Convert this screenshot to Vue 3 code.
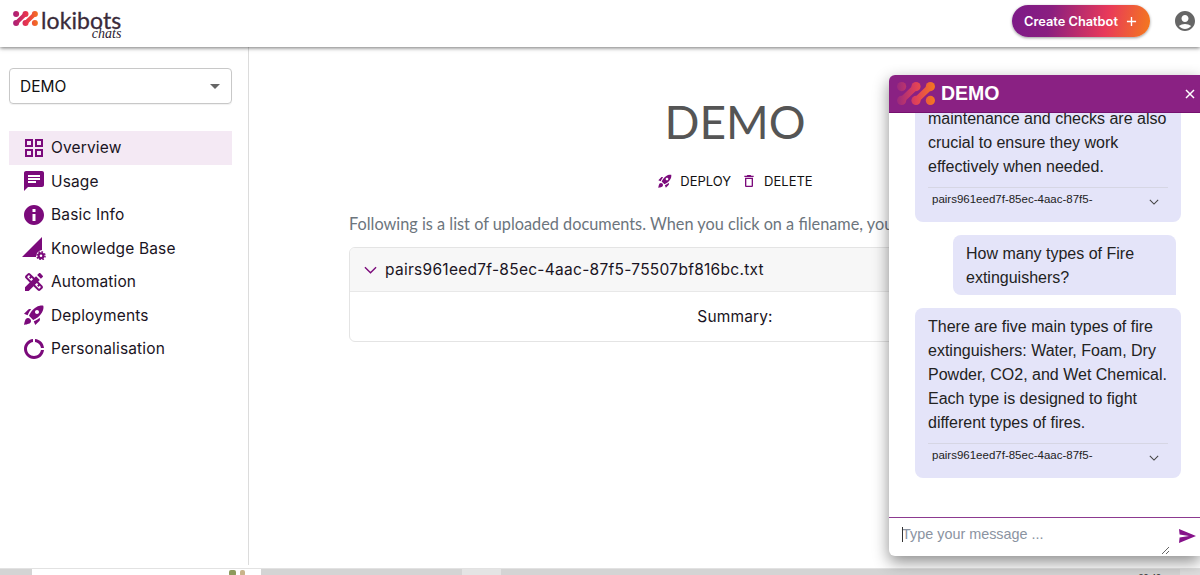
<script setup>
const nav = [
  { label: 'Overview', vb: '0 0 24 24', d: 'M3 3v8h8V3H3zm6 6H5V5h4v4zm-6 4v8h8v-8H3zm6 6H5v-4h4v4zm4-16v8h8V3h-8zm6 6h-4V5h4v4zm-6 4v8h8v-8h-8zm6 6h-4v-4h4v4z', active: true },
  { label: 'Usage', vb: '0 0 24 24', d: 'M20 2H4c-1.1 0-1.99.9-1.99 2L2 22l4-4h14c1.1 0 2-.9 2-2V4c0-1.1-.9-2-2-2zM6 9h12v2H6V9zm8 5H6v-2h8v2zm4-6H6V6h12v2z' },
  { label: 'Basic Info', vb: '0 0 24 24', d: 'M12 2C6.48 2 2 6.48 2 12s4.48 10 10 10 10-4.48 10-10S17.52 2 12 2zm1.5 16h-3v-7h3v7zm0-9h-3V6h3v3z' },
  { label: 'Knowledge Base', kb: true },
  { label: 'Automation', vb: '0 0 24 24', d: 'M16.24 11.51l1.57-1.57-3.75-3.75-1.57 1.57-4.14-4.13c-.78-.78-2.05-.78-2.83 0l-1.9 1.9c-.78.78-.78 2.05 0 2.83l4.13 4.13L3 17.25V21h3.75l4.76-4.76 4.13 4.13c.95.95 2.23.6 2.83 0l1.9-1.9c.78-.78.78-2.05 0-2.83l-4.13-4.13zm-7.06-.44L5.04 6.94l1.89-1.9L8.2 6.31 7.02 7.5l1.41 1.41 1.19-1.19 1.45 1.45-1.89 1.9zm7.88 7.89l-4.13-4.14 1.9-1.9 1.45 1.45-1.19 1.19 1.41 1.41 1.19-1.19 1.27 1.27-1.9 1.91zM20.71 7.04a1 1 0 0 0 0-1.41l-2.34-2.34c-.47-.47-1.12-.29-1.41 0l-1.83 1.83 3.75 3.75 1.83-1.83z' },
  { label: 'Deployments', vb: '0 0 24 24', d: 'M9.19 6.35c-2.04 2.29-3.44 5.58-3.57 5.89L2 10.69l4.05-4.05c.47-.47 1.15-.68 1.81-.55l1.33.26zM11.17 17s3.74-1.55 5.89-3.7c5.4-5.4 4.5-9.62 4.21-10.57-.95-.3-5.17-1.19-10.57 4.21C8.55 9.09 7 12.83 7 12.83L11.17 17zm6.48-2.19c-2.29 2.04-5.58 3.44-5.89 3.57L13.31 22l4.05-4.05c.47-.47.68-1.15.55-1.81l-.26-1.33zM9 18c0 .83-.34 1.58-.88 2.12C6.94 21.3 2 22 2 22s.7-4.94 1.88-6.12C4.42 15.34 5.17 15 6 15c1.66 0 3 1.34 3 3zm4-9c0-1.1.9-2 2-2s2 .9 2 2-.9 2-2 2-2-.9-2-2z' },
  { label: 'Personalisation', vb: '0 0 24 24', d: 'M11 5.08V2c-5 .5-9 4.81-9 10s4.5 10 10 10 9.5-4 10-9h-3.03c-.43 3-3.2 6-6.97 6-3.87 0-7-3.13-7-7 0-3.5 3-6.44 6-6.92zM18.97 11H22c-.47-5-4-8.53-9-9v3.08C16 5.51 18.54 8 18.97 11z' }
]
const rocket = nav[5].d
const dots = [[3, 3.2], [13, 3.2], [23, 3.2], [3, 12.8], [13, 12.8], [23, 12.8]]
</script>

<template>
  <div class="page">
    <header class="topbar">
      <div class="brand">
        <svg class="brand-mark" viewBox="0 0 26 16" aria-hidden="true">
          <defs>
            <linearGradient id="lg1" gradientUnits="userSpaceOnUse" x1="0" y1="8" x2="26" y2="8">
              <stop offset="0" stop-color="#a81e78" />
              <stop offset=".55" stop-color="#e8344f" />
              <stop offset="1" stop-color="#f4711f" />
            </linearGradient>
          </defs>
          <path d="M3 12.8 13 3.2M13 12.8 23 3.2" fill="none" stroke="url(#lg1)" stroke-width="4.2" />
          <circle v-for="p in dots" :key="p.join()" :cx="p[0]" :cy="p[1]" r="3.2" fill="url(#lg1)" />
        </svg>
        <div class="brand-words">
          <span class="brand-name">lokibots</span>
          <span class="brand-sub">chats</span>
        </div>
      </div>
      <div class="top-actions">
        <button class="create">
          <span>Create Chatbot</span>
          <svg viewBox="0 0 12 12" class="plus"><path d="M6 1v10M1 6h10" stroke="#fff" stroke-width="1.5" fill="none" /></svg>
        </button>
        <svg class="avatar" viewBox="2 2 20 20"><path fill="#666" d="M12 2C6.48 2 2 6.48 2 12s4.48 10 10 10 10-4.48 10-10S17.52 2 12 2zm0 4c1.93 0 3.5 1.57 3.5 3.5S13.93 13 12 13s-3.5-1.57-3.5-3.5S10.07 6 12 6zm0 14c-2.03 0-4.43-.82-6.14-2.88C7.55 15.8 9.68 15 12 15s4.45.8 6.14 2.12C16.43 19.18 14.03 20 12 20z" /></svg>
      </div>
    </header>

    <div class="body">
      <aside class="sidebar">
        <div class="select">
          <span>DEMO</span>
          <i class="caret"></i>
        </div>
        <nav class="nav">
          <a v-for="item in nav" :key="item.label" class="nav-item" :class="{ active: item.active }">
            <svg v-if="item.kb" class="nav-icon" viewBox="0 0 24 24">
              <path fill="#7b0a7b" d="M0 21 20 1v13a7 7 0 0 0-6 7z" />
              <circle cx="19" cy="19.8" r="2.4" fill="none" stroke="#7b0a7b" stroke-width="2.2" />
              <circle cx="19" cy="19.8" r="4" fill="none" stroke="#7b0a7b" stroke-width="1.5" stroke-dasharray="1.6 1.54" />
            </svg>
            <svg v-else class="nav-icon" :viewBox="item.vb"><path fill="#7b0a7b" :d="item.d" /></svg>
            <span>{{ item.label }}</span>
          </a>
        </nav>
      </aside>

      <main class="main">
        <h1 class="title">DEMO</h1>
        <div class="actions">
          <span class="action">
            <svg class="action-icon rocket" viewBox="0 0 24 24"><path fill="#7b0a7b" :d="rocket" /></svg>
            DEPLOY
          </span>
          <span class="action">
            <svg class="action-icon" viewBox="0 0 24 24"><path fill="#7b0a7b" d="M6 19c0 1.1.9 2 2 2h8c1.1 0 2-.9 2-2V7H6v12zM8 9h8v10H8V9zm7.5-5l-1-1h-5l-1 1H5v2h14V4z" /></svg>
            DELETE
          </span>
        </div>
        <p class="lead">Following is a list of uploaded documents. When you click on a filename, you</p>
        <section class="accordion">
          <div class="acc-head">
            <svg class="acc-chevron" viewBox="0 0 14 8"><path d="M1 1l6 6 6-6" fill="none" stroke="#7b0a7b" stroke-width="1.5" /></svg>
            <span>pairs961eed7f-85ec-4aac-87f5-75507bf816bc.txt</span>
          </div>
          <div class="acc-body">Summary:</div>
        </section>
      </main>
    </div>

    <footer class="strip">
      <span class="seg seg-a"></span>
      <span class="seg seg-b">
        <i class="blob green"></i><i class="blob tan"></i>
      </span>
      <span class="seg seg-c"></span>
      <span class="seg seg-d"></span>
      <span class="seg seg-e"><b class="clock">20:40</b></span>
      <span class="seg seg-f"></span>
    </footer>

    <aside class="chat">
      <div class="chat-head">
        <svg class="chat-mark" viewBox="0 0 26 16" aria-hidden="true">
          <defs>
            <linearGradient id="lg2" gradientUnits="userSpaceOnUse" x1="0" y1="8" x2="26" y2="8">
              <stop offset="0" stop-color="#9c2a7c" />
              <stop offset=".5" stop-color="#e0405a" />
              <stop offset="1" stop-color="#f4771f" />
            </linearGradient>
          </defs>
          <path d="M3 12.8 13 3.2M13 12.8 23 3.2" fill="none" stroke="url(#lg2)" stroke-width="4.2" />
          <circle v-for="p in dots" :key="p.join()" :cx="p[0]" :cy="p[1]" r="3.2" fill="url(#lg2)" />
        </svg>
        <span class="chat-title">DEMO</span>
        <svg class="chat-close" viewBox="0 0 10 10"><path d="M1 1l8 8M9 1l-8 8" stroke="#fff" stroke-width="1.5" fill="none" /></svg>
      </div>
      <div class="messages">
        <div class="bubble bot">
          <p>maintenance and checks are also crucial to ensure they work effectively when needed.</p>
          <div class="source">
            <span>pairs961eed7f-85ec-4aac-87f5-</span>
            <svg viewBox="0 0 12 7"><path d="M1 1l5 5 5-5" fill="none" stroke="#444" stroke-width="1.3" /></svg>
          </div>
        </div>
        <div class="bubble user">
          <p>How many types of Fire extinguishers?</p>
        </div>
        <div class="bubble bot">
          <p>There are five main types of fire extinguishers: Water, Foam, Dry Powder, CO2, and Wet Chemical. Each type is designed to fight different types of fires.</p>
          <div class="source">
            <span>pairs961eed7f-85ec-4aac-87f5-</span>
            <svg viewBox="0 0 12 7"><path d="M1 1l5 5 5-5" fill="none" stroke="#444" stroke-width="1.3" /></svg>
          </div>
        </div>
      </div>
      <div class="composer">
        <i class="cursor"></i>
        <textarea class="input" placeholder="Type your message ..."></textarea>
        <svg class="send" viewBox="0 0 17 14"><path fill="#86118a" d="M0 0 17 7 0 14l.6-5.6L10 7 .6 5.6z" /></svg>
      </div>
    </aside>
  </div>
</template>

<style>
html, body { margin: 0; background: #fff; overflow: hidden; }
</style>

<style scoped>
.page {
  width: 1200px;
  height: 575px;
  position: relative;
  display: flex;
  flex-direction: column;
  overflow: hidden;
  background: #fff;
  font-family: "Inter", "Liberation Sans", sans-serif;
  color: #1a1423;
}
.topbar {
  height: 47px;
  flex: none;
  display: flex;
  align-items: flex-start;
  justify-content: space-between;
  padding: 0 5px 0 13px;
  box-sizing: border-box;
  background: #fff;
  box-shadow: 0 1px 4px rgba(0, 0, 0, .55);
  position: relative;
  z-index: 2;
}
.brand { display: flex; align-items: flex-start; gap: 3px; padding-top: 11px; }
.brand-mark { width: 25px; height: 15px; }
.brand-words { display: flex; flex-direction: column; align-items: flex-end; }
.brand-name {
  font-family: "Lato", sans-serif;
  font-size: 23px;
  line-height: 18px;
  color: #3a2b3a;
  letter-spacing: .1px;
  -webkit-text-stroke: .3px #3a2b3a;
}
.brand-sub {
  font-family: "Liberation Serif", serif;
  font-style: italic;
  font-size: 14px;
  line-height: 10px;
  color: #2b2230;
}
.top-actions { display: flex; align-items: center; gap: 25px; padding-top: 5px; }
.create {
  width: 138px;
  height: 32px;
  border: 0;
  border-radius: 16px;
  padding: 0 12px 0 12px;
  display: flex;
  align-items: center;
  justify-content: space-between;
  background: linear-gradient(100deg, #7c1a88 0%, #8a1f80 28%, #e8395a 68%, #f47a1c 100%);
  box-shadow: 0 1px 3px rgba(0, 0, 0, .4);
  color: #fff;
  font: 600 12.8px "Inter", sans-serif;
}
.plus { width: 11px; height: 11px; margin-right: 1px; }
.avatar { width: 20px; height: 20px; }

.body { flex: 1; display: flex; min-height: 0; }
.sidebar {
  width: 249px;
  flex: none;
  height: 518px;
  box-sizing: border-box;
  border-right: 1px solid #dcdcdc;
  padding: 21px 16px 0 9px;
}
.select {
  height: 36px;
  box-sizing: border-box;
  border: 1px solid #c8c8c8;
  border-radius: 4px;
  box-shadow: 0 1px 1px rgba(0,0,0,.06);
  display: flex;
  align-items: center;
  justify-content: space-between;
  padding: 0 11px 0 10px;
  font-size: 15.5px;
  color: #111;
}
.caret {
  width: 0;
  height: 0;
  border-left: 5px solid transparent;
  border-right: 5px solid transparent;
  border-top: 5px solid #666;
}
.nav { margin-top: 27px; display: flex; flex-direction: column; }
.nav-item {
  height: 33.5px;
  display: flex;
  align-items: center;
  gap: 5px;
  padding-left: 13px;
  font-size: 15.5px;
  letter-spacing: .15px;
  color: #1a1423;
}
.nav-item.active { background: #f4e9f4; }
.nav-icon { width: 24px; height: 24px; flex: none; }

.main {
  flex: 1;
  min-width: 0;
  box-sizing: border-box;
  padding: 0 79px 0 100px;
  display: flex;
  flex-direction: column;
}
.title {
  margin: 44px 0 0;
  font: 400 46px/62px "Lato", sans-serif;
  color: #555;
  text-align: center;
}
.actions {
  margin-top: 18px;
  display: flex;
  justify-content: center;
  gap: 10px;
  font-size: 13px;
  line-height: 20px;
  color: #111;
}
.action { display: inline-flex; align-items: center; gap: 7px; }
.action-icon { width: 16px; height: 16px; }
.lead {
  margin: 21px 0 0;
  font: 400 16.3px/24px "Lato", sans-serif;
  color: #6c757d;
  white-space: nowrap;
}
.accordion {
  margin-top: 11px;
  border: 1px solid #e4e4e4;
  border-radius: 6px;
  overflow: hidden;
}
.acc-head {
  height: 44px;
  box-sizing: border-box;
  display: flex;
  align-items: center;
  gap: 8px;
  padding-left: 14px;
  background: #f7f7f7;
  border-bottom: 1px solid #e8e8e8;
  font-size: 15.5px;
  letter-spacing: .28px;
  color: #1a1423;
}
.acc-chevron { width: 13px; height: 8px; }
.acc-body {
  height: 49px;
  display: flex;
  align-items: center;
  justify-content: center;
  font-size: 15.5px;
  letter-spacing: .15px;
  color: #1a1423;
}

.strip {
  height: 7px;
  flex: none;
  margin-top: auto;
  display: flex;
  overflow: hidden;
  background: #d4d4d4;
  border-top: 1px solid #e2e2e2;
  box-sizing: border-box;
}
.seg { display: block; height: 100%; position: relative; }
.seg-a { width: 32px; }
.seg-b { width: 229px; background: #fff; display: flex; justify-content: flex-end; gap: 4px; padding-right: 16px; box-sizing: border-box; }
.seg-c { width: 201px; }
.seg-d { width: 39px; background: #e4e4e4; }
.seg-e { width: 679px; text-align: right; }
.seg-f { flex: 1; background: #dedede; }
.blob { display: block; width: 7px; height: 6px; margin-top: 1px; border-radius: 2px; }
.blob.green { background: #8d9a5c; }
.blob.tan { background: #c9b48a; width: 5px; }
.clock {
  position: absolute;
  right: 19px;
  top: 3px;
  font: 400 9px/10px "Liberation Sans", sans-serif;
  color: #333;
}

.chat {
  position: absolute;
  left: 889px;
  right: 0;
  top: 75px;
  height: 481px;
  z-index: 3;
  display: flex;
  flex-direction: column;
  background: #fff;
  border-radius: 6px 0 0 6px;
  box-shadow: 0 6px 16px rgba(0, 0, 0, .45);
  font-family: "Liberation Sans", sans-serif;
  overflow: hidden;
}
.chat-head {
  height: 38px;
  flex: none;
  box-sizing: border-box;
  display: flex;
  align-items: center;
  gap: 6px;
  padding: 0 5px 0 8px;
  background: #8a2183;
  border-bottom: 1px solid #75106f;
  color: #fff;
  position: relative;
  z-index: 1;
}
.chat-mark { width: 38px; height: 23px; }
.chat-title { font-weight: 700; font-size: 19.5px; flex: 1; }
.chat-close { width: 10px; height: 10px; }
.messages {
  flex: 1;
  min-height: 0;
  display: flex;
  flex-direction: column;
  justify-content: flex-end;
  gap: 13px;
  padding: 0 19px 39px 26px;
  overflow: hidden;
}
.bubble {
  flex: none;
  box-sizing: border-box;
  background: #e4e4f9;
  border-radius: 8px;
  padding: 7px 13px 0;
  font-size: 16px;
  line-height: 24px;
  color: #222;
}
.bubble p { margin: 0; }
.bubble.bot { width: 266px; }
.bubble.user {
  width: 223px;
  align-self: flex-end;
  margin-right: 5px;
  border-bottom-right-radius: 0;
  padding-bottom: 5px;
}
.source {
  margin-top: 8px;
  height: 35px;
  border-top: 1px solid #d6d6e4;
  display: flex;
  align-items: flex-start;
  justify-content: space-between;
  padding: 1px 9px 0 4px;
  box-sizing: border-box;
  font-size: 11.5px;
  line-height: 20px;
  color: #222;
}
.source svg { width: 10px; height: 6px; margin-top: 10px; }
.composer {
  height: 39px;
  flex: none;
  box-sizing: border-box;
  border-top: 1px solid #8c3a90;
  position: relative;
  display: flex;
  align-items: flex-start;
  padding: 0 4px 0 8px;
}
.input {
  width: 273px;
  height: 37px;
  box-sizing: border-box;
  border: 0;
  outline: 0;
  padding: 6px 5px;
  resize: both;
  background: transparent;
  font: 14.4px/20px "Liberation Sans", sans-serif;
  color: #333;
}
.input::placeholder { color: #8b93a1; opacity: 1; }
.cursor {
  position: absolute;
  left: 13px;
  top: 9px;
  width: 1px;
  height: 15px;
  background: #333;
}
.send { width: 17px; height: 14px; margin: 11px 0 0 9px; }
</style>
